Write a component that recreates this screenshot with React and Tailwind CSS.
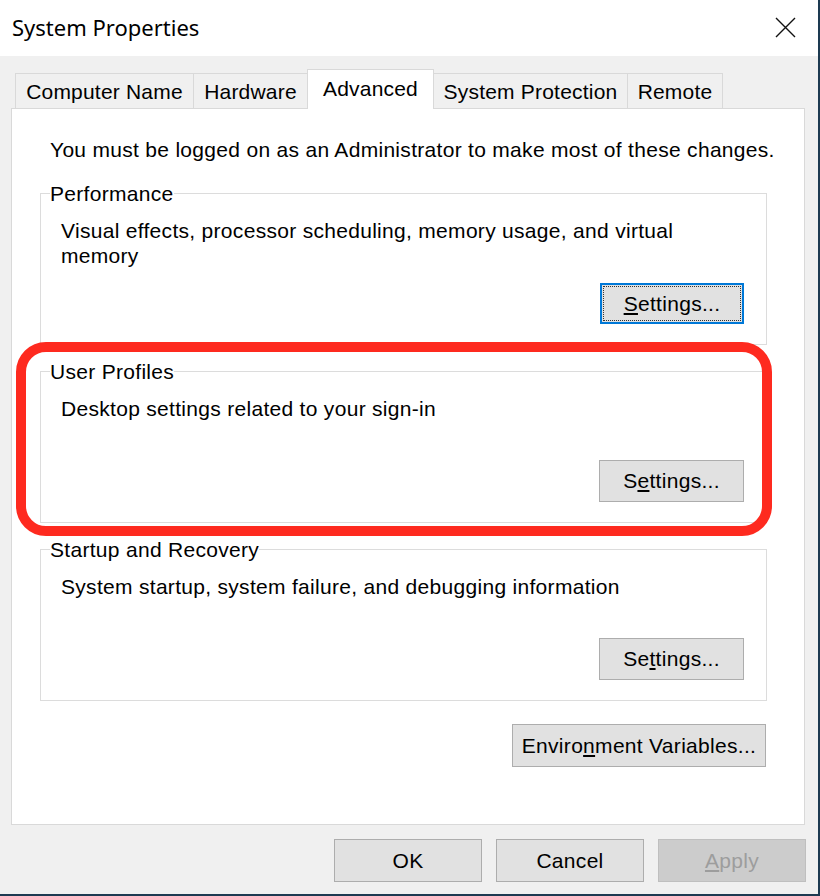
import React from "react";

const FONT = { fontFamily: '"Liberation Sans", Arial, sans-serif' };

function Btn({ children, className = "", focused = false, disabled = false }) {
  return (
    <div
      className={
        "relative flex items-center justify-center text-[21px] tracking-[0.3px] leading-[24px] " +
        (disabled
          ? "bg-[#cccccc] border border-[#bfbfbf] text-[#9d9d9d] "
          : focused
          ? "bg-[#e1e1e1] border-2 border-[#0078d7] text-black "
          : "bg-[#e1e1e1] border border-[#adadad] text-black ") +
        className
      }
    >
      {focused && (
        <div className="absolute inset-[1px] border border-dotted border-[#333]" />
      )}
      <span>{children}</span>
    </div>
  );
}

function Group({ title, desc, btn }) {
  return (
    <div className="relative w-[727px] h-[152px] border border-[#dcdcdc] flex flex-col pl-[20px] pr-[22px] pt-[24px] pb-[20px]">
      <span className="absolute left-[9px] top-[-12px] bg-white leading-[24px] text-[21px] tracking-[0.3px]">
        {title}
      </span>
      <div className="text-[21px] tracking-[0.3px] leading-[25px]">{desc}</div>
      <div className="flex-1" />
      <div className="flex justify-end">{btn}</div>
    </div>
  );
}

function Tab({ children, className = "" }) {
  return (
    <div
      className={
        "flex items-center justify-center h-[35px] pt-[2px] bg-[#f0f0f0] border-t border-l border-[#d9d9d9] text-[21px] tracking-[0.2px] leading-[24px] " +
        className
      }
    >
      {children}
    </div>
  );
}

export default function App() {
  return (
    <div
      className="relative w-[820px] h-[896px] bg-[#f0f0f0] border-r-2 border-b-2 border-[#1d3a51] flex flex-col overflow-hidden text-black"
      style={FONT}
    >
      {/* Title bar */}
      <div className="h-[56px] bg-white flex items-center justify-between pl-[12px] pr-[22px] shrink-0">
        <span
          className="text-[22px] leading-[30px] pb-[2px]"
          style={{ fontFamily: '"Noto Sans", "Open Sans", sans-serif' }}
        >
          System Properties
        </span>
        <svg width="21" height="21" viewBox="0 0 21 21" className="mt-[-2px]">
          <path d="M1 1 L20 20 M20 1 L1 20" stroke="#111" strokeWidth="1.4" fill="none" />
        </svg>
      </div>

      {/* Tabs */}
      <div className="flex items-end h-[39px] mt-[13px] ml-[15px] shrink-0">
        <Tab className="w-[178px]">Computer Name</Tab>
        <Tab className="w-[114px]">Hardware</Tab>
        <div className="relative z-10 flex items-start justify-center h-[40px] w-[127px] mb-[-1px] pt-[7px] bg-white border-t border-l border-r border-[#d9d9d9] text-[21px] tracking-[0.2px] leading-[24px]">
          Advanced
        </div>
        <Tab className="w-[193px] border-l-0">System Protection</Tab>
        <Tab className="w-[96px] border-r">Remote</Tab>
      </div>

      {/* Panel */}
      <div className="ml-[11px] mr-[13px] h-[717px] shrink-0 bg-white border border-[#d9d9d9] flex flex-col pt-[29px] pl-[28px]">
        <div className="ml-[10px] text-[21px] tracking-[0.3px] leading-[24px]">
          You must be logged on as an Administrator to make most of these changes.
        </div>
        <div className="mt-[31px] flex flex-col gap-[26px]">
          <Group
            title="Performance"
            desc={
              <>
                Visual effects, processor scheduling, memory usage, and virtual
                <br />
                memory
              </>
            }
            btn={
              <Btn focused className="w-[144px] h-[41px]">
                <u className="underline-offset-2">S</u>ettings...
              </Btn>
            }
          />
          <Group
            title="User Profiles"
            desc="Desktop settings related to your sign-in"
            btn={
              <Btn className="w-[145px] h-[42px]">
                S<u className="underline-offset-2">e</u>ttings...
              </Btn>
            }
          />
          <Group
            title="Startup and Recovery"
            desc="System startup, system failure, and debugging information"
            btn={
              <Btn className="w-[145px] h-[42px]">
                Se<u className="underline-offset-2">t</u>tings...
              </Btn>
            }
          />
        </div>
        <div className="w-[727px] flex justify-end mt-[23px]">
          <Btn className="w-[254px] h-[43px] mr-[1px]">
            Enviro<u className="underline-offset-2">n</u>ment Variables...
          </Btn>
        </div>
      </div>

      {/* Bottom buttons */}
      <div className="flex justify-end gap-[14px] mt-[14px] mr-[12px]">
        <Btn className="w-[148px] h-[43px]">OK</Btn>
        <Btn className="w-[148px] h-[43px]">Cancel</Btn>
        <Btn disabled className="w-[148px] h-[43px]">
          <u className="underline-offset-2">A</u>pply
        </Btn>
      </div>

      {/* Red annotation highlight */}
      <div className="absolute left-[16px] top-[342px] w-[756px] h-[194px] border-[10px] border-[#fe2a1f] rounded-[30px] pointer-events-none" />
    </div>
  );
}
